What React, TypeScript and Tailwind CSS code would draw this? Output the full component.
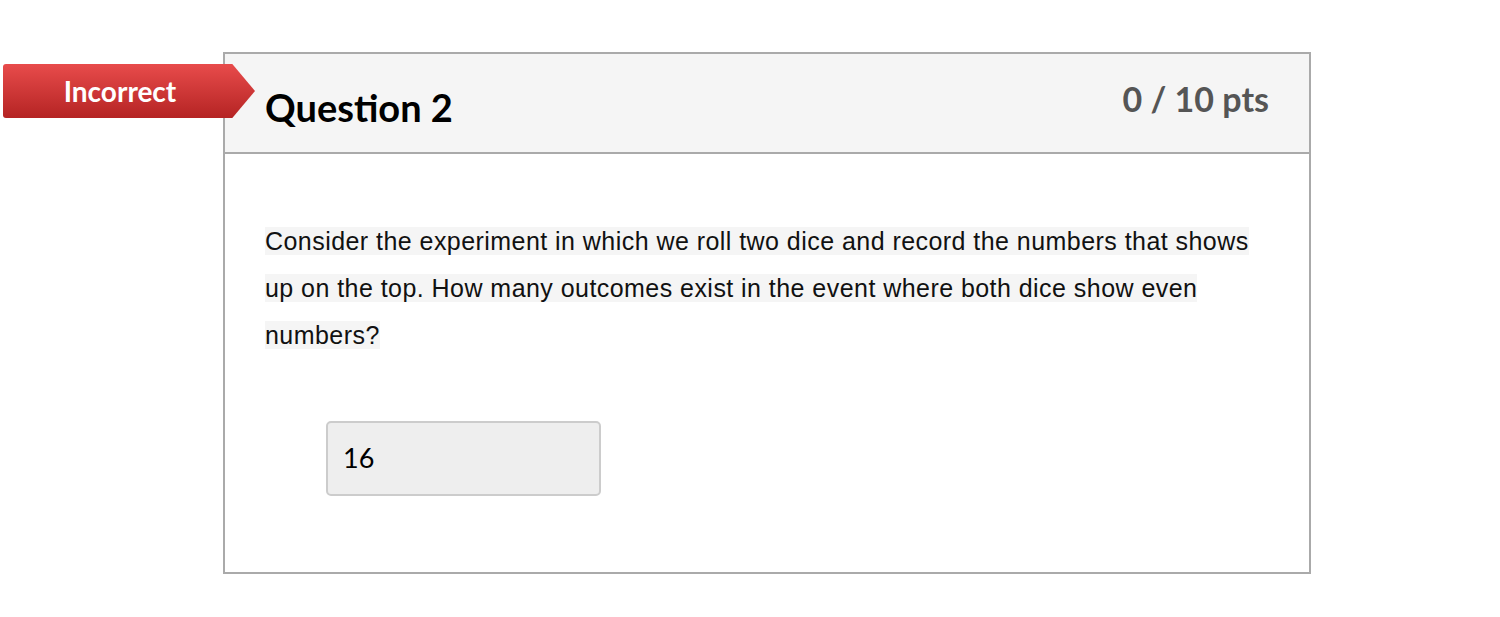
import React from "react";

export default function App() {
  return (
    <div className="w-[1500px] h-[617px] bg-white relative">
      <div className="pt-[52px] pl-[223px]">
        <div className="relative w-[1088px] h-[522px] border-2 border-[#aaaaaa] flex flex-col">
          <div className="h-[100px] bg-[#f5f5f5] border-b-2 border-[#aaaaaa] flex justify-between px-[40px] font-['Lato',sans-serif] font-bold">
            <div className="text-[38px] text-black pt-[31px] leading-[1.2]">Question 2</div>
            <div className="text-[34px] text-[#555555] pt-[25px] leading-[1.2]">0 / 10 pts</div>
          </div>
          <div className="px-[40px] pt-[64px] font-['Liberation_Sans',Arial,sans-serif] text-[25px] tracking-[0.45px] leading-[47px] text-[#111]">
            <p className="w-[1000px]">
              <span className="bg-[#f5f5f5]">
                Consider the experiment in which we roll two dice and record the numbers that shows up on the top. How many outcomes exist in the event where both dice show even numbers?
              </span>
            </p>
          </div>
          <div className="pl-[101px] pt-[62px]">
            <div className="w-[275px] h-[75px] bg-[#eeeeee] border-2 border-[#cccccc] rounded-[5px] flex items-center px-[15px] font-['Lato',sans-serif] text-[27px] text-black">
              16
            </div>
          </div>
        </div>
      </div>
      <div
        className="absolute left-[3px] top-[64px] w-[252px] h-[54px] bg-gradient-to-b from-[#e84b4b] to-[#b52323] flex items-center pr-[18px] justify-center font-['Lato',sans-serif] font-bold text-[28px] text-white rounded-l-[3px]"
        style={{ clipPath: "polygon(0 0, 91% 0, 100% 50%, 91% 100%, 0 100%)" }}
      >
        <span className="leading-none pt-[1px] pb-[1px]">Incorrect</span>
      </div>
    </div>
  );
}
